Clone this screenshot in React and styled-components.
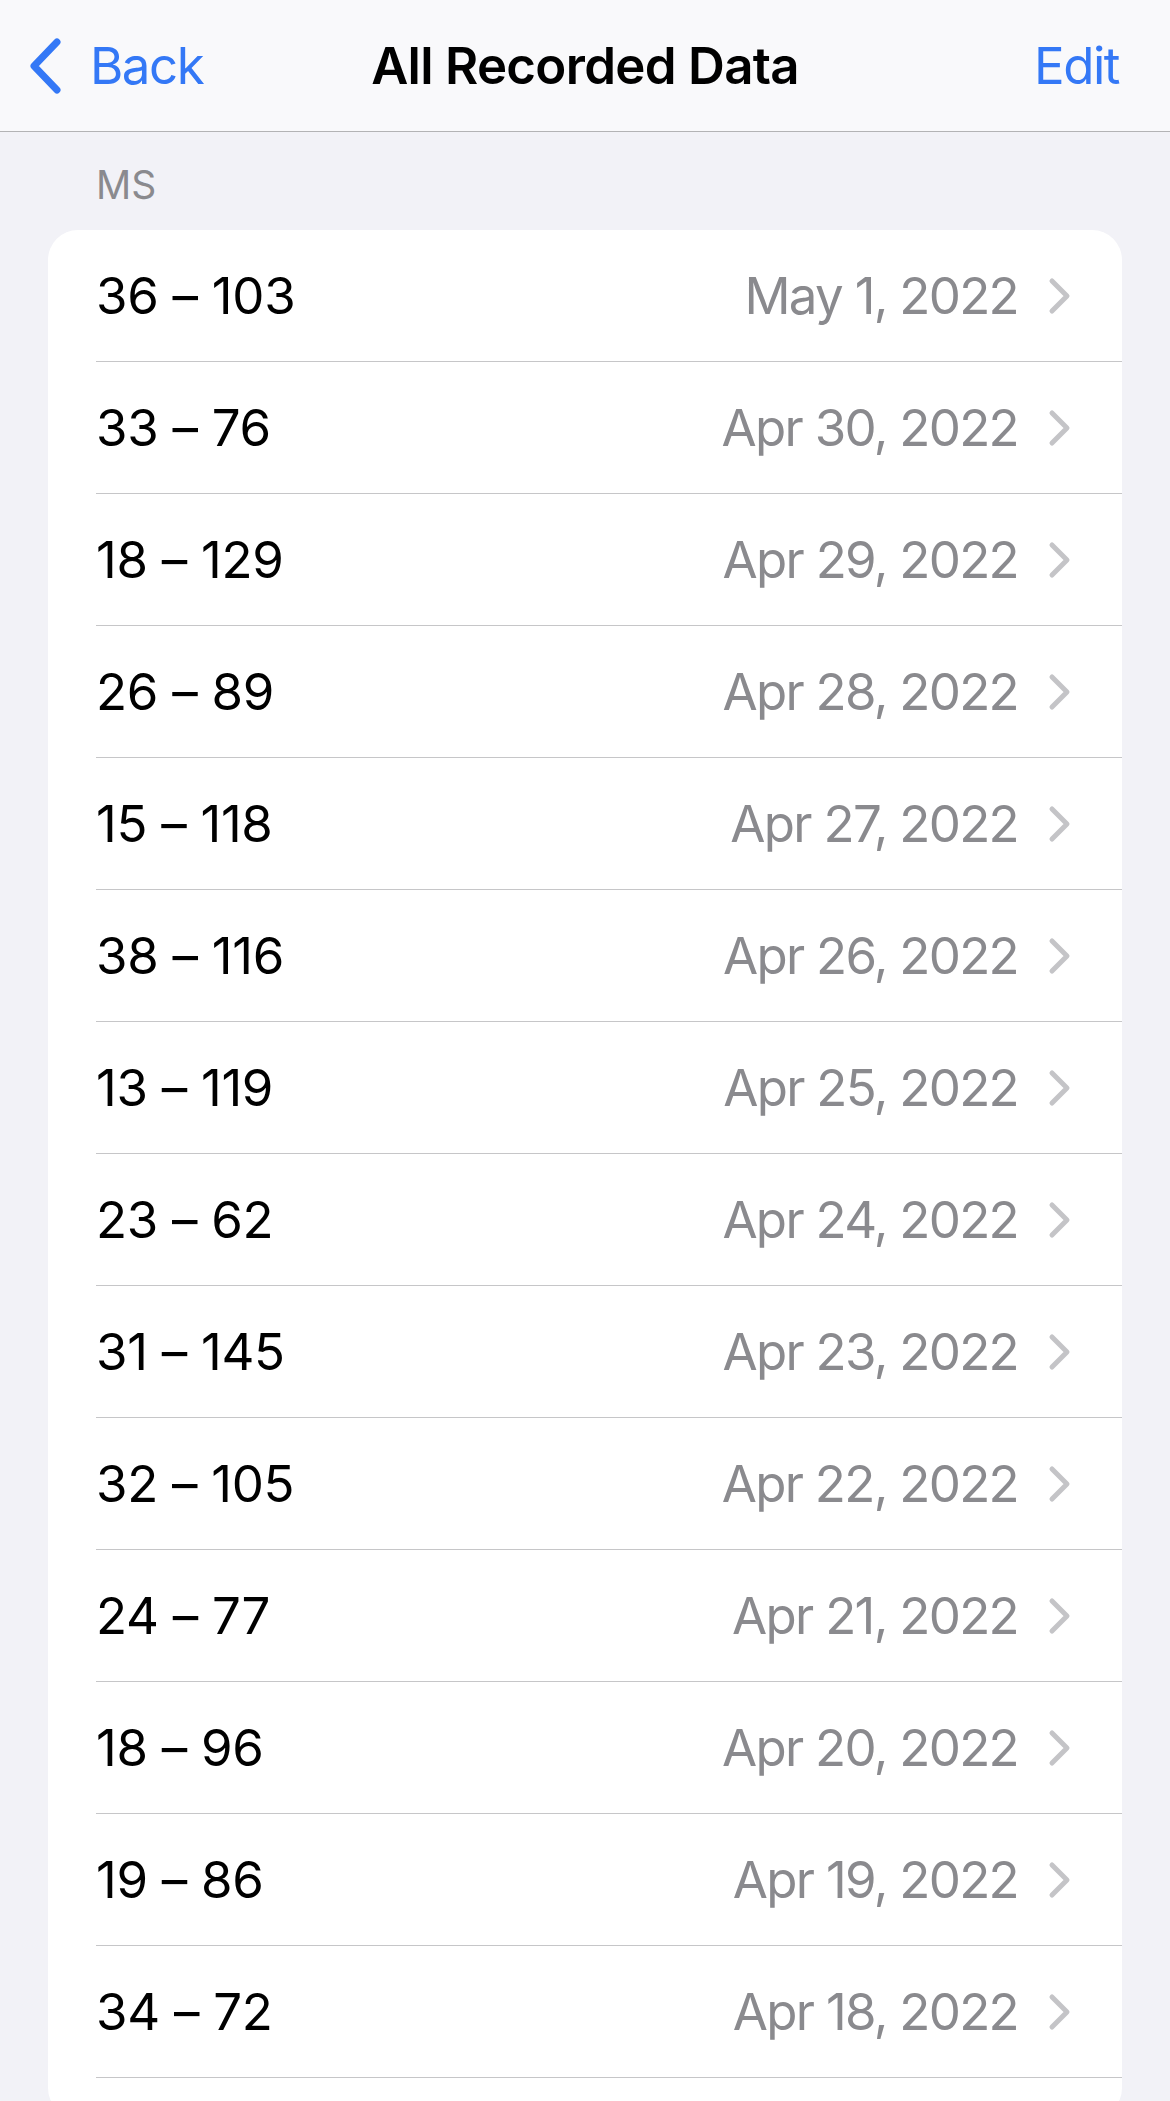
import styled, { createGlobalStyle } from "styled-components"

const GlobalStyle = createGlobalStyle`
html, body {
  margin: 0;
  padding: 0;
  background: #f2f2f7;
  font-family: Inter, "Liberation Sans", sans-serif;
  -webkit-font-smoothing: antialiased;
}
`

const Page = styled.div`
min-height: 2101px;
background: #f2f2f7;
overflow: hidden;
`

const NavBar = styled.header`
height: 132px;
box-sizing: border-box;
background: #f9f9fb;
border-bottom: 1px solid #b3b3b5;
display: grid;
grid-template-columns: 1fr auto 1fr;
align-items: center;
`

const BackButton = styled.div`
display: flex;
align-items: center;
gap: 28px;
padding-left: 28px;
color: #3478f6;
font-size: 51px;
line-height: 132px;
letter-spacing: -1.5px;
`

const Title = styled.h1`
margin: 0;
font-size: 51px;
font-weight: 600;
line-height: 132px;
color: #000;
letter-spacing: -0.7px;
`

const EditButton = styled.div`
justify-self: end;
padding-right: 51px;
color: #3478f6;
font-size: 51px;
line-height: 132px;
letter-spacing: -1.5px;
`

const SectionHeader = styled.div`
padding: 33px 0 26px 96px;
font-size: 39px;
line-height: 39px;
color: #8a8a8e;
text-transform: uppercase;
`

const Card = styled.div`
margin: 0 48px;
background: #fff;
border-radius: 30px;
padding: 0 0 40px 48px;
overflow: hidden;
`

const Row = styled.div`
height: 132px;
box-sizing: border-box;
display: flex;
align-items: center;
padding-right: 50px;
border-bottom: 1px solid #c6c6c8;
`

const Range = styled.span`
flex: 1;
font-size: 51px;
color: #000;
letter-spacing: -0.3px;
`

const DateText = styled.span`
font-size: 51px;
color: #8a8a8e;
margin-right: 30px;
letter-spacing: -1.7px;
`

const rows = [
  ["36 – 103", "May 1, 2022"],
  ["33 – 76", "Apr 30, 2022"],
  ["18 – 129", "Apr 29, 2022"],
  ["26 – 89", "Apr 28, 2022"],
  ["15 – 118", "Apr 27, 2022"],
  ["38 – 116", "Apr 26, 2022"],
  ["13 – 119", "Apr 25, 2022"],
  ["23 – 62", "Apr 24, 2022"],
  ["31 – 145", "Apr 23, 2022"],
  ["32 – 105", "Apr 22, 2022"],
  ["24 – 77", "Apr 21, 2022"],
  ["18 – 96", "Apr 20, 2022"],
  ["19 – 86", "Apr 19, 2022"],
  ["34 – 72", "Apr 18, 2022"],
]

function BackChevron() {
  return (
    <svg width="34" height="58" viewBox="0 0 34 58">
      <path d="M29 5 L6 29 L29 53" fill="none" stroke="#3478f6" strokeWidth="7" strokeLinecap="round" strokeLinejoin="round" />
    </svg>
  )
}

function RowChevron() {
  return (
    <svg width="24" height="38" viewBox="0 0 24 38">
      <path d="M4 4 L19 19 L4 34" fill="none" stroke="#c4c4c7" strokeWidth="5" strokeLinecap="round" strokeLinejoin="round" />
    </svg>
  )
}

export default function App() {
  return (
    <Page>
      <GlobalStyle />
      <NavBar>
        <BackButton>
          <BackChevron />
          <span>Back</span>
        </BackButton>
        <Title>All Recorded Data</Title>
        <EditButton>Edit</EditButton>
      </NavBar>

      <SectionHeader>MS</SectionHeader>
      <Card>
        {rows.map(([range, date]) => (
          <Row key={date}>
            <Range>{range}</Range>
            <DateText>{date}</DateText>
            <RowChevron />
          </Row>
        ))}
      </Card>
    </Page>
  )
}
